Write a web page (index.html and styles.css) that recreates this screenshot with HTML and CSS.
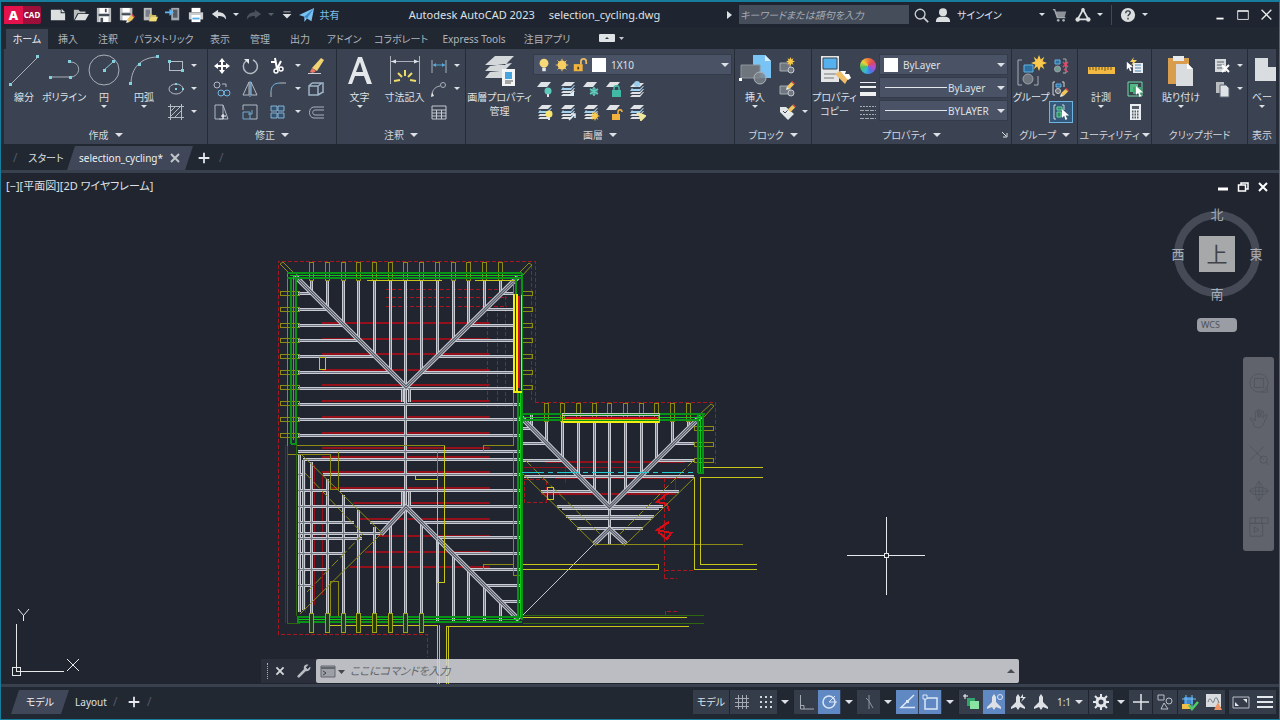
FILE: index.html
```html
<!DOCTYPE html>
<html lang="ja">
<head>
    <meta charset="UTF-8">
    <meta name="viewport" content="width=device-width, initial-scale=1.0">
    <title>Autodesk AutoCAD 2023 - selection_cycling.dwg</title>
    <link rel="stylesheet" href="styles.css">
</head>
<body>
<!-- shared icons -->
<svg class="defs" aria-hidden="true">
    <symbol id="sheets" viewBox="0 0 18 18">
        <path d="M6 2h10l-4 4H2z" fill="#dfe3e6"/><path d="M4 7h1l-1 1h8l3-3h1l-4 5H2z" fill="#9fd0ee"/><path d="M4 11h8l3-3h1l-4 5H2zM4 14h8l3-3h1l-4 5H2z" fill="#dfe3e6"/>
    </symbol>
    <symbol id="sheet" viewBox="0 0 18 18"><path d="M5 2h10l-4 5H1z" fill="#dfe3e6"/></symbol>
    <symbol id="star" viewBox="0 0 18 18"><path d="M9 0l2 5 4-3-2 5 5 2-5 2 2 5-4-3-2 5-2-5-4 3 2-5-5-2 5-2-2-5 4 3z" fill="#fbc94b"/></symbol>
    <symbol id="pencil" viewBox="0 0 10 10"><path d="M0 10l1-4 3 3z" fill="#f3efe2"/><path d="M1 6l5-5 3 3-5 5z" fill="#efc75e"/><path d="M6 1l1-1 3 3-1 1z" fill="#e2493f"/></symbol>
    <symbol id="cursor" viewBox="0 0 10 12"><path d="M1 0v10l2.500-2.500L5 12l2-1-2-4h4z" fill="#fff"/></symbol>
    <symbol id="annot" viewBox="0 0 18 18"><path d="M9 1l2 3v5l5 5v2l-5-2-2 3-2-3-5 2v-2l5-5V4z" fill="#dde1e6"/></symbol>
</svg>

<div class="app">
    <header class="titlebar">
        <button class="logo" aria-label="AutoCAD"><b>A</b><span>CAD</span></button>
        <nav class="qat">
            <button aria-label="新規"><svg viewBox="0 0 18 18"><path d="M1 3h11v4h5v8H1z" fill="#dcdfe0"/><path d="M13 2l4 4h-4z" fill="#dcdfe0"/></svg></button>
            <button aria-label="開く"><svg viewBox="0 0 18 18"><path d="M1 15V3h5l2 2h6v2H5z" fill="#b9bcbd"/><path d="M6 8h12l-4 7H2z" fill="#dcdfe0"/></svg></button>
            <button aria-label="上書き保存"><svg viewBox="0 0 18 18"><path d="M1 1h16v16H1z" fill="#b9bdc0"/><path d="M4 1h10v6H4zM4 11h10v6H4z" fill="#fff"/><path d="M10 2h2v4h-2zM5 12h3v5H5zM3 8h12v2H3z" fill="#444b57"/></svg></button>
            <button aria-label="名前を付けて保存"><svg viewBox="0 0 18 18"><path d="M1 1h14v14H1z" fill="#b9bdc0"/><path d="M4 1h8v5H4zM4 10h8v5H4z" fill="#fff"/><path d="M3 7h10v2H3z" fill="#444b57"/><use href="#pencil" x="8" y="8" width="10" height="10"/></svg></button>
            <button aria-label="Web から開く"><svg viewBox="0 0 18 18"><path d="M2 1h9v14H2z" fill="#b9bdc0"/><path d="M4 3h5v8H4z" fill="#777d86"/><path d="M8 8h3l1 1h4v7H8z" fill="#c8b964"/><path d="M10 11h8l-2 5H8z" fill="#f1dc7a"/></svg></button>
            <button aria-label="Web に保存"><svg viewBox="0 0 18 18"><path d="M7 1h9v14H7z" fill="#a3a8ae"/><path d="M9 3h5v9H9z" fill="#555c68"/><path d="M0 5h5V2l5 4-5 4V7H0z" fill="#5eb5f0"/></svg></button>
            <button aria-label="印刷"><svg viewBox="0 0 18 18"><path d="M4 1h10v5H4z" fill="#fff"/><path d="M1 6h16v8H1z" fill="#c9cdd0"/><path d="M4 9h10v8H4z" fill="#fff"/><path d="M5 12h8v2H5z" fill="#52b1f0"/></svg></button>
            <button aria-label="元に戻す"><svg viewBox="0 0 18 18"><path d="M1 8l7-5v3c6 0 9 3 9 8-2-3-4-4-9-4v3z" fill="#dcdfe0"/></svg></button>
            <i class="arr s"></i>
            <button aria-label="やり直し"><svg viewBox="0 0 18 18"><path d="M17 8l-7-5v3c-6 0-9 3-9 8 2-3 4-4 9-4v3z" fill="#4c525d"/></svg></button>
            <i class="arr s dim"></i>
            <button class="narrow" aria-label="カスタマイズ"><svg viewBox="0 0 18 18"><path d="M5 5h8v1H5zM4 8h10l-5 5z" fill="#dcdfe0"/></svg></button>
            <button class="share"><svg viewBox="0 0 18 18"><path d="M0 9L17 1l-3 15-5-3-3 4V11z" fill="#79c2f2"/><path d="M6 11L17 1 9 13z" fill="#3a8dc9"/></svg>共有</button>
        </nav>
        <h1 class="doc-title"><span>Autodesk AutoCAD 2023</span><span>selection_cycling.dwg</span></h1>
        <div class="title-right">
            <i class="tri-right"></i>
            <input class="search" type="text" placeholder="キーワードまたは語句を入力" aria-label="検索">
            <button aria-label="検索実行"><svg viewBox="0 0 18 18"><circle cx="8" cy="8" r="5.500" fill="none" stroke="#c9ced3" stroke-width="1.500"/><path d="M12 12l5 5" stroke="#c9ced3" stroke-width="2"/></svg></button>
            <button class="signin"><svg viewBox="0 0 18 18"><circle cx="9" cy="6" r="4.500" fill="#dcdfe0"/><path d="M1 17c0-6 4-6 8-6s8 0 8 6z" fill="#dcdfe0"/></svg>サインイン</button>
            <i class="arr s"></i>
            <button aria-label="ストア"><svg viewBox="0 0 18 18"><path d="M3 5h13l-2 7H6z" fill="#8d9298"/><path d="M1 3h2l3 9h9" fill="none" stroke="#a5aab0" stroke-width="1.500"/><circle cx="7" cy="15" r="1.500" fill="#a5aab0"/><circle cx="13" cy="15" r="1.500" fill="#a5aab0"/></svg></button>
            <button aria-label="Autodesk App"><svg viewBox="0 0 18 18"><path d="M9 3L3 14h12z" fill="none" stroke="#dcdfe0" stroke-width="2"/><circle cx="9" cy="3" r="2" fill="#dcdfe0"/><circle cx="3" cy="14" r="2.500" fill="#dcdfe0"/><circle cx="15" cy="14" r="2.500" fill="#dcdfe0"/></svg></button>
            <i class="arr s"></i>
            <span class="vsep"></span>
            <button aria-label="ヘルプ"><svg viewBox="0 0 18 18"><circle cx="9" cy="9" r="8" fill="#dcdfe0"/><path d="M6.500 7c0-4 5-3 5-.5 0 2-2.500 2-2.500 4M9 12v2" fill="none" stroke="#303744" stroke-width="1.500"/></svg></button>
            <i class="arr s"></i>
            <div class="win">
                <button aria-label="最小化"><svg viewBox="0 0 18 18"><path d="M5 13h8" stroke="#fff" stroke-width="2"/></svg></button>
                <button aria-label="最大化"><svg viewBox="0 0 18 18"><path d="M3 4h12v10H3zM3 5h12" fill="none" stroke="#e9ebed" stroke-width="1"/></svg></button>
                <button aria-label="閉じる"><svg viewBox="0 0 18 18"><path d="M4 3l11 11M15 3L4 14" stroke="#e9ebed" stroke-width="1.500"/></svg></button>
            </div>
        </div>
    </header>

    <nav class="tabs">
        <button class="tab active">ホーム</button>
        <button class="tab">挿入</button>
        <button class="tab">注釈</button>
        <button class="tab wide">パラメトリック</button>
        <button class="tab">表示</button>
        <button class="tab">管理</button>
        <button class="tab">出力</button>
        <button class="tab mid">アドイン</button>
        <button class="tab long">コラボレート</button>
        <button class="tab wide">Express Tools</button>
        <button class="tab long">注目アプリ</button>
        <button class="tab" aria-label="リボン表示"><svg class="ribbon-toggle" viewBox="0 0 28 10"><rect width="16" height="8" rx="1" fill="#dfe3e6"/><path d="M6 5l2-2 2 2z" fill="#333b48"/><path d="M20 3h5l-2.500 3z" fill="#c4c8ce"/></svg></button>
    </nav>

    <div class="ribbon">
        <section class="panel create">
            <div class="body">
                <button class="big"><svg viewBox="0 0 34 34"><path d="M4 30L31 3" stroke="#a9b0b9"/><path d="M2 29h3v3H2zM29 1h3v3h-3z" fill="#84d0dd"/></svg>線分</button>
                <button class="big"><svg viewBox="0 0 34 34"><path d="M4 23h19c11 0 12-15 0-15" fill="none" stroke="#a9b0b9" stroke-width="1"/><path d="M2 22h3v3H2zM22 22h3v3h-3zM21 6h3v3h-3z" fill="#84d0dd"/></svg>ポリライン</button>
                <button class="big"><svg viewBox="0 0 34 34"><circle cx="17" cy="16" r="15" fill="none" stroke="#a9b0b9"/><path d="M17 16l9-8" stroke="#84d0dd"/><path d="M16 15h3v3h-3zM25 6h3v3h-3z" fill="#84d0dd"/></svg>円<i class="arr s"></i></button>
                <button class="big"><svg viewBox="0 0 34 34"><path d="M4 30C4 14 14 3 31 3" fill="none" stroke="#a9b0b9"/><path d="M2 28h3v3H2zM11 9h3v3h-3zM29 1h3v3h-3z" fill="#84d0dd"/></svg>円弧<i class="arr s"></i></button>
                <div class="smalls g2">
                    <button aria-label="長方形"><svg viewBox="0 0 18 18"><rect x="2.500" y="4.500" width="13" height="9" fill="none" stroke="#b5bbc3"/><path d="M1 3h3v3H1zM14 12h3v3h-3z" fill="#84d0dd"/></svg></button><i class="arr s"></i>
                    <button aria-label="楕円"><svg viewBox="0 0 18 18"><ellipse cx="9" cy="9" rx="7" ry="5" fill="none" stroke="#b5bbc3"/><path d="M8 8h2v2H8zM8 3h2v2H8zM15 8h2v2h-2z" fill="#84d0dd"/></svg></button><i class="arr s"></i>
                    <button aria-label="ハッチング"><svg viewBox="0 0 18 18"><path d="M3.500 1v16M14.500 1v16M1 3.500h16M1 14.500h16M4 8l4-4M4 13l9-9M8 14l6-6" fill="none" stroke="#b5bbc3"/></svg></button><i class="arr s"></i>
                </div>
            </div>
            <button class="foot">作成<i class="arr"></i></button>
        </section>

        <section class="panel modify">
            <div class="body">
                <div class="smalls g5">
                    <button aria-label="移動"><svg viewBox="0 0 18 18"><path d="M9 1l3 4h-2v3h3V6l4 3-4 3v-2h-3v3h2l-3 4-3-4h2v-3H5v2L1 9l4-3v2h3V5H6z" fill="#fff"/></svg></button>
                    <button aria-label="回転"><svg viewBox="0 0 18 18"><path d="M12 3a7 7 0 1 1-7 1" fill="none" stroke="#b5bbc3" stroke-width="1.500"/><path d="M3 2h5v5z" fill="#e7eaed"/></svg></button>
                    <button aria-label="トリム"><svg viewBox="0 0 18 18"><path d="M6 1l2 11M12 4L8 12M2 5h5" stroke="#fff" stroke-width="2"/><circle cx="7" cy="14" r="2" fill="none" stroke="#fff" stroke-width="1.500"/><circle cx="12" cy="12" r="2" fill="none" stroke="#fff" stroke-width="1.500"/></svg></button><i class="arr s"></i>
                    <button aria-label="削除"><svg viewBox="0 0 18 18"><path d="M14 1l3 2-7 11-5-3z" fill="#f2d371"/><path d="M5 11l4 3-3 2-3-1z" fill="#f07764"/><path d="M1 16.500h13" stroke="#cdd2d6"/></svg></button>
                    <button aria-label="複写"><svg viewBox="0 0 18 18"><g fill="none" stroke="#b5bbc3"><circle cx="4" cy="5" r="3"/><path d="M9 4h4v3"/></g><g fill="none" stroke="#73b9e5"><circle cx="8" cy="13" r="3"/><circle cx="14" cy="13" r="3"/></g></svg></button>
                    <button aria-label="鏡像"><svg viewBox="0 0 18 18"><path d="M8 2L2 15h6zM10 2l6 13h-6z" fill="none" stroke="#b5bbc3"/><path d="M9 1v16" stroke="#73b9e5"/></svg></button>
                    <button aria-label="フィレット"><svg viewBox="0 0 18 18"><path d="M2 17v-5" stroke="#b5bbc3"/><path d="M2 12c0-6 3-9 9-9" fill="none" stroke="#73b9e5"/><path d="M11 3h6" stroke="#b5bbc3"/></svg></button><i class="arr s"></i>
                    <button aria-label="分解"><svg viewBox="0 0 18 18"><path d="M2 6h9v9H2zM5 3h11v10M2 6l3-3M11 6l4-3M11 15l5-3" fill="none" stroke="#9eb3c6" stroke-width="1.500"/></svg></button>
                    <button aria-label="ストレッチ"><svg viewBox="0 0 18 18"><path d="M2 2v14h8V2zM10 2l5 14H6" fill="none" stroke="#aeb8c3"/><path d="M10 11v5M8 13h5" stroke="#fff"/></svg></button>
                    <button aria-label="尺度変更"><svg viewBox="0 0 18 18"><path d="M2 7V2h14v14h-7" fill="none" stroke="#aeb8c3"/><path d="M2 9h7v7H2zM7 11h4V7" fill="none" stroke="#73a9cb"/></svg></button>
                    <button aria-label="配列複写"><svg viewBox="0 0 18 18"><g fill="#31526f" stroke="#8ab2d1"><path d="M2 3h6v5H2zM9 3h6v5H9zM2 10h6v5H2zM9 10h6v5H9z"/></g></svg></button><i class="arr s"></i>
                    <button aria-label="オフセット"><svg viewBox="0 0 18 18"><path d="M17 4H7c-6 0-6 11 0 11h10M17 7H8c-3 0-3 5 0 5h9" fill="none" stroke="#a8b1bb"/></svg></button>
                </div>
            </div>
            <button class="foot">修正<i class="arr"></i></button>
        </section>

        <section class="panel annotate">
            <div class="body">
                <button class="big"><svg viewBox="0 0 34 34"><path d="M5 30L15 3h4l10 27h-5l-3-8h-9l-3 8zM13 18h7L17 8z" fill="#e3e7ea" fill-rule="evenodd"/></svg>文字<i class="arr s"></i></button>
                <button class="big"><svg viewBox="0 0 34 34"><path d="M2.500 2v28M31.500 2v28M3 7.500h28" stroke="#a9b0b9"/><path d="M3 7.500l5-2v4zM31 7.500l-5-2v4z" fill="#dfe3e6"/><path d="M17 16v6M10 19l4 4M24 19l-4 4M6 27l6-1M28 27l-6-1" stroke="#eddc68" stroke-width="2"/></svg>寸法記入</button>
                <div class="smalls g2">
                    <button aria-label="長さ寸法"><svg viewBox="0 0 18 18"><path d="M2 3v13M16 3v13" stroke="#a9b0b9"/><path d="M3 8h12" stroke="#55a9d6"/><path d="M3 8l3-2v4zM15 8l-3-2v4z" fill="#55a9d6"/></svg></button><i class="arr s"></i>
                    <button aria-label="引出線"><svg viewBox="0 0 18 18"><path d="M2 16c0-5 2-9 8-10" fill="none" stroke="#a9b0b9"/><circle cx="13" cy="5" r="2.500" fill="none" stroke="#a9b0b9"/><path d="M1 17l1-5 2 4z" fill="#dfe3e6"/></svg></button><i class="arr s"></i>
                    <button aria-label="表"><svg viewBox="0 0 18 18"><path d="M2 3h14v13H2zM2 7h14M2 10h14M2 13h14M6.500 7v9M11.500 7v9" fill="none" stroke="#c5cad0"/></svg></button>
                </div>
            </div>
            <button class="foot">注釈<i class="arr"></i></button>
        </section>

        <section class="panel layers">
            <div class="body">
                <button class="big"><svg viewBox="0 0 34 34"><path d="M12 2h19l-9 9H2zM7 12l-5 5h19l8-8M7 18l-5 6h17l8-8" fill="#d4d8da"/><path d="M19 15h13v17H19z" fill="#f4f5f6"/><path d="M22 18h7v7h-7z" fill="#48a5dd"/><path d="M22 27h8M22 29h6" stroke="#555"/></svg><span>画層プロパティ<br>管理</span></button>
                <div class="layer-tools">
                    <div class="combo">
                        <svg viewBox="0 0 18 18"><circle cx="9" cy="7" r="5" fill="#f7d878"/><path d="M7 12h4v4H7z" fill="#e3e5e8"/></svg>
                        <svg viewBox="0 0 18 18"><circle cx="9" cy="9" r="5" fill="#f8cf62"/><path d="M9 2v14M2 9h14M4 4l10 10M14 4L4 14" stroke="#f8cf62" stroke-width="1"/></svg>
                        <svg viewBox="0 0 18 18"><path d="M2 8h10v8H2z" fill="#f3b43f"/><path d="M10 8V5c0-4 6-4 6 0v3" fill="none" stroke="#e8bb62" stroke-width="2"/><path d="M6 11h2v3H6z" fill="#5b431d"/></svg>
                        <i class="swatch"></i>
                        <select aria-label="画層"><option>1X10</option></select>
                    </div>
                    <div class="layer-grid">
                        <button aria-label="非表示"><svg viewBox="0 0 18 18"><use href="#sheet"/><circle cx="12" cy="11" r="3.500" fill="#5ecabb"/><path d="M11 14h2v3h-2z" fill="#dfe3e6"/></svg></button>
                        <button aria-label="選択表示"><svg viewBox="0 0 18 18"><use href="#sheets"/><path d="M9 16l6-6v6z" fill="#dceefa"/></svg></button>
                        <button aria-label="フリーズ"><svg viewBox="0 0 18 18"><use href="#sheet"/><path d="M12 7v9M8 9l8 5M16 9l-8 5" stroke="#5ecabb" stroke-width="1.500"/><circle cx="12" cy="11.500" r="3" fill="none" stroke="#5ecabb"/></svg></button>
                        <button aria-label="ロック"><svg viewBox="0 0 18 18"><use href="#sheet"/><path d="M7 10h9v7H7z" fill="#41b9a4"/><path d="M9 10V8c0-3 5-3 5 0v2" fill="none" stroke="#41b9a4" stroke-width="1.500"/></svg></button>
                        <button aria-label="現在層に設定"><svg viewBox="0 0 18 18"><use href="#sheets" y="1"/><circle cx="9" cy="4" r="3" fill="#9bcdea"/></svg></button>
                        <button aria-label="全表示"><svg viewBox="0 0 18 18"><use href="#sheets"/><circle cx="13" cy="11" r="3.500" fill="#f7e46e"/><path d="M12 14h2v3h-2z" fill="#dfe3e6"/></svg></button>
                        <button aria-label="選択表示解除"><svg viewBox="0 0 18 18"><use href="#sheets"/><path d="M10 17l6-6m-4 0h4v4" stroke="#dceefa" fill="none" stroke-width="1.500"/></svg></button>
                        <button aria-label="全フリーズ解除"><svg viewBox="0 0 18 18"><use href="#sheets"/><use href="#star" x="8" y="8" width="10" height="10"/></svg></button>
                        <button aria-label="ロック解除"><svg viewBox="0 0 18 18"><use href="#sheet"/><path d="M7 11h8v6H7z" fill="#f3b43f"/><path d="M13 11V9c0-3 4-3 4 0" fill="none" stroke="#f3b43f" stroke-width="1.500"/></svg></button>
                        <button aria-label="画層を一致"><svg viewBox="0 0 18 18"><use href="#sheets"/><path d="M9 10l5 5M13 17l4-4-5-2z" stroke="#f1e69d" stroke-width="2" fill="#f1e69d"/></svg></button>
                    </div>
                </div>
            </div>
            <button class="foot">画層<i class="arr"></i></button>
        </section>

        <section class="panel block">
            <div class="body">
                <button class="big"><svg viewBox="0 0 34 34"><path d="M15 1h12l6 6v17H15z" fill="#79c3f5"/><path d="M27 1v6h6z" fill="#d6ecfb"/><path d="M3 11h19v13H3z" fill="#6f757d" stroke="#8e949b"/><circle cx="22" cy="24" r="6" fill="#7c838b" fill-opacity=".8" stroke="#aeb4ba"/><path d="M1 24h3v3H1z" fill="#fff"/></svg>挿入<i class="arr s"></i></button>
                <div class="smalls g2">
                    <button aria-label="ブロック作成"><svg viewBox="0 0 18 18"><path d="M2 6h10v8H2z" fill="#717780" stroke="#a4abb2"/><circle cx="13" cy="13" r="3" fill="#717780" stroke="#c4cad0"/><use href="#star" x="8" width="9" height="9"/></svg></button><i></i>
                    <button aria-label="ブロック編集"><svg viewBox="0 0 18 18"><path d="M2 6h10v8H2z" fill="#717780" stroke="#a4abb2"/><circle cx="13" cy="13" r="3" fill="#717780" stroke="#c4cad0"/><use href="#pencil" x="8" y="1" width="9" height="9"/></svg></button><i></i>
                    <button aria-label="属性"><svg viewBox="0 0 18 18"><path d="M2 4h6l8 7-6 6-8-8z" fill="#e2e6e9"/><path d="M5 8l2 2 4-4" stroke="#414957" fill="none"/><use href="#pencil" x="9" y="1" width="9" height="9"/></svg></button><i class="arr s"></i>
                </div>
            </div>
            <button class="foot">ブロック<i class="arr"></i></button>
        </section>

        <section class="panel props">
            <div class="body">
                <button class="big"><svg viewBox="0 0 34 34"><path d="M3 2h18v26H3z" fill="#e3e5e7"/><path d="M5 4h14v11H5z" fill="#55b0ed" stroke="#3d454f"/><path d="M6 20h12M6 24h10" stroke="#777"/><path d="M17 20l5-3 8 8-3 5z" fill="#eebe6b"/><path d="M22 17l8 9 3-2-2-4-4 0 1-3z" fill="#fff"/></svg><span>プロパティ<br>コピー</span></button>
                <div class="smalls g1">
                    <button aria-label="色"><i class="wheel"></i></button>
                    <button aria-label="線の太さ"><svg viewBox="0 0 18 18"><path d="M1 2.500h16" stroke="#eef0f2"/><path d="M1 7h16" stroke="#eef0f2" stroke-width="2"/><path d="M1 14h16" stroke="#eef0f2" stroke-width="4"/></svg></button>
                    <button aria-label="線種"><svg viewBox="0 0 18 18"><path d="M1 3.500h16M1 11.500h16" stroke="#a6adb5" stroke-dasharray="2 1"/><path d="M1 7.500h16M1 15.500h16" stroke="#a6adb5" stroke-dasharray="4 1"/></svg></button>
                </div>
                <div class="prop-list">
                    <div class="combo"><i class="swatch"></i><select aria-label="オブジェクトの色"><option>ByLayer</option></select></div>
                    <div class="combo"><i class="line"></i><select aria-label="線の太さ"><option>ByLayer</option></select></div>
                    <div class="combo"><i class="line"></i><select aria-label="線種"><option>BYLAYER</option></select></div>
                </div>
            </div>
            <button class="foot">プロパティ<i class="arr"></i><svg class="launch" viewBox="0 0 8 8"><path d="M1 1l4 4M6 2v4H2" fill="none" stroke="#dfe3e6"/></svg></button>
        </section>

        <section class="panel group">
            <div class="body">
                <button class="big"><svg viewBox="0 0 34 34"><path d="M8 6H4v25h4M20 31h4V22" fill="none" stroke="#a7adb5"/><path d="M10 11h9v7h-9z" fill="#2d6f9e" stroke="#65b3e4"/><circle cx="14" cy="25" r="5" fill="#6f757d" stroke="#9ca3aa"/><use href="#star" x="17" y="1" width="16" height="16"/></svg>グループ</button>
                <div class="smalls g1">
                    <button aria-label="グループ解除"><svg viewBox="0 0 18 18"><path d="M3 3h5v4H3z" fill="#2d6f9e" stroke="#65b3e4"/><circle cx="5.500" cy="12" r="3" fill="#6f9a92" stroke="#9ca3aa"/><path d="M11 2h3v14h-3" fill="none" stroke="#aaa"/><path d="M11 5l5 5M16 5l-5 5M12 12l4 3" stroke="#e3496a" stroke-width="1.500"/></svg></button>
                    <button aria-label="グループ編集"><svg viewBox="0 0 18 18"><path d="M3 2H1v13h2M10 2h2v5" fill="none" stroke="#d1d6da"/><path d="M4 4h5v3H4z" fill="#2d6f9e" stroke="#65b3e4"/><circle cx="6" cy="11" r="2.500" fill="#6f757d" stroke="#ccc"/><use href="#pencil" x="8" y="8" width="9" height="9"/></svg></button>
                    <button class="on" aria-label="グループ選択"><svg viewBox="0 0 18 18"><path d="M4 2H2v14h2M10 2h2v5" fill="none" stroke="#d1d6da"/><path d="M5 4h5v3H5zM5 9h4v5H5z" fill="#2f8c68" stroke="#65d39b"/><use href="#cursor" x="9" y="6" width="9" height="11"/></svg></button>
                </div>
            </div>
            <button class="foot">グループ<i class="arr"></i></button>
        </section>

        <section class="panel util">
            <div class="body">
                <button class="big"><svg viewBox="0 0 34 34"><path d="M4 13h27v7H4z" fill="#f2ba43"/><path d="M6 13v3M9 13v3M12 13v4M15 13v3M18 13v3M21 13v4M24 13v3M27 13v3" stroke="#765719"/></svg>計測<i class="arr s"></i></button>
                <div class="smalls g1">
                    <button aria-label="クイック選択"><svg viewBox="0 0 18 18"><path d="M7 6h10v10H7z" fill="#e9edf0"/><path d="M9 8h6M9 11h6M9 14h6" stroke="#4f82a8"/><path d="M8 0L4 5h3L5 9l6-6H7z" fill="#f8d15d"/><use href="#cursor" x="0" y="4" width="8" height="11"/></svg></button>
                    <button aria-label="すべて選択"><svg viewBox="0 0 18 18"><path d="M2 2h14v14H2z" fill="none" stroke="#70dca1"/><path d="M4 4h8v8H4z" fill="#51ba83"/><path d="M7 7h8v7H7z" fill="#41a673"/><use href="#cursor" x="9" y="6" width="9" height="11"/></svg></button>
                    <button aria-label="計算機"><svg viewBox="0 0 18 18"><path d="M4 1h11v16H4z" fill="#e9edf0"/><path d="M6 3h7v3H6z" fill="#555d69"/><path d="M6 8.500h7M6 11.500h7M6 14.500h7" stroke="#555d69" stroke-width="2" stroke-dasharray="1.500 1"/></svg></button>
                </div>
            </div>
            <button class="foot">ユーティリティ<i class="arr"></i></button>
        </section>

        <section class="panel clip">
            <div class="body">
                <button class="big"><svg viewBox="0 0 34 34"><path d="M4 4h21v26H4z" fill="#d89d4d"/><path d="M9 2h11v5H9z" fill="#e8ebed"/><path d="M12 10h12l5 5v17H12z" fill="#dadddf"/><path d="M23 9v6h6z" fill="#fff"/></svg>貼り付け<i class="arr s"></i></button>
                <div class="smalls g2">
                    <button aria-label="切り取り"><svg viewBox="0 0 18 18"><path d="M2 2h11v13H2z" fill="#d5d9dc"/><path d="M4 5h7M4 8h7M4 11h5" stroke="#59616c"/><path d="M9 8l7 7M16 8l-7 7" stroke="#fff" stroke-width="2"/></svg></button><i class="arr s"></i>
                    <button aria-label="コピー"><svg viewBox="0 0 18 18"><path d="M3 2h8v11H3z" fill="#b9bdc0"/><path d="M7 5h6l3 3v9H7z" fill="#e0e3e5" stroke="#5b6470"/></svg></button><i class="arr s"></i>
                </div>
            </div>
            <div class="foot">クリップボード</div>
        </section>

        <section class="panel view">
            <div class="body">
                <button class="big"><svg viewBox="0 0 34 34"><path d="M10 4h13v9h9v14H10z" fill="#dadddf"/></svg>ベー<i class="arr s"></i></button>
            </div>
            <div class="foot">表示</div>
        </section>
    </div>

    <nav class="filetabs">
        <span class="slash">/</span>
        <button class="filetab">スタート</button>
        <div class="filetab current">selection_cycling*<button class="close" aria-label="閉じる"><svg viewBox="0 0 12 12"><path d="M2 2l8 8M10 2l-8 8" stroke="#c0c5cc" stroke-width="2"/></svg></button></div>
        <button class="add" aria-label="新しい図面"><svg viewBox="0 0 18 18"><path d="M9 3v12M3 9h12" stroke="#e6e9ed" stroke-width="2"/></svg></button>
        <span class="slash">/</span>
    </nav>

    <main class="canvas">
        <svg class="drawing" viewBox="1 173 1278 511" role="img" aria-label="小屋伏図">
            <g class="red-dash">
                <path d="M535 402H715V464M535 402V261H278V634H427.500V657M531 265V400"/>
                <path d="M386 289H507M386 297.500H507M386 306.500H507M487.500 307V407M497 307V407M505.500 290V407"/>
                <path d="M524 479H546V502H524zM664.500 478V580M664 578H677M665 570.500H694M677 611H665V617"/>
            </g>
            <!-- tie lines -->
            <path class="red" d="M322 323H490M322 339H490M322 354H490M322 370H490M322 385H490M322 401H490M322 417H490M322 433H490M322 448H490M322 457H490M322 472H490M330 488H490M353 503H490M358 519H490M378 536H490M365 552H490M350 567H490"/>
            <path class="red" d="M545 462H685M555 478H690M541 494H676"/>
            <path class="red thin" d="M523 467.500H640M285.500 445V623M305.500 460V612M314.500 465V605M322.500 475V595M565.500 462V483M675.500 478V490"/>
            <path class="red zig" d="M669 492l-12 10 10 2 2 7M669 522l-12 8 14 3-4 6-9-7"/>

            <!-- rafters: pale edges, then a dark core over them -->
            <g class="rafter">
                <g id="rafters">
                    <path d="M311.500 280V292M327.500 280V308M343.500 280V324M358.500 280V339M374.500 280V355M390.500 280V371M405.500 280V620M421.500 280V371M437.500 280V355M453.500 280V339M468.500 280V324M484.500 280V308M500.500 280V292"/>
                    <path d="M298 293.500H312M298 309.500H328M298 325.500H344M298 340.500H359M298 356.500H375M298 372.500H391M298 388.500H513M298 404.500H521M298 419.500H521M298 435.500H521M501 293.500H513M484 309.500H513M468 325.500H513M453 340.500H513M437 356.500H513M421 372.500H513"/>
                    <path d="M298 451.500H521M303 459.500H521M323 474.500H521M340 490.500H521M344 506.500H521M370 522.500H393M422 522.500H521M438 537.500H521M454 553.500H521M469 569.500H521M485 585.500H521M501 601.500H521"/>
                    <path d="M298 490.500H329M298 506.500H343M298 522.500H354M298 533.500H382M298 538.500H362M298 553.500H345M298 569.500H326M298 585.500H312M298 474.500H302"/>
                    <path d="M299.500 455V612M303.500 460V610M311.500 462V615M327.500 479V615M343.500 495V615M358.500 510V615M374.500 527V615M390.500 525V615M421.500 524V615M437.500 538V621M453.500 554V621M468.500 570V621M484.500 586V621M500.500 602V621M402.500 388V402M409.500 388V402M402.500 492V506M409.500 492V506"/>
                    <path d="M546.500 421V443M562.500 421V459M578.500 421V474M594.500 421V491M609.500 421V544M625.500 421V491M641.500 421V474M656.500 421V458M672.500 421V443M688.500 421V427M531.500 414V428"/>
                    <path d="M523 428.500H532M523 443.500H547M523 460.500H562M672 443.500H694M656 460.500H694M524 476.500H694M541 491.500H594M624 491.500H679M557 506.500H663M562 508.500H659M566 516.500H654M569 518.500H651M577 528.500H643"/>
                </g>
            </g>
            <use class="rafter-core" href="#rafters"/>
            <!-- hips and valleys -->
            <g class="hip">
                <path id="hips" d="M295 276L406 387L518 277M381 534L406 507L519 620M520 416L609.500 507L701 416M594 544L609.500 529L626 544"/>
            </g>
            <use class="hip-core" href="#hips"/>
            <use class="hip-mid" href="#hips"/>
            <path class="pale diag" d="M515 623L595 543"/>

            <g class="olive">
                <path class="diag" d="M302 455L382 533L300 614M523 474L595 544.500H743M694 478L626 544"/>
                <path class="diag dash" d="M305 473L363 534L307 592M525 460L601 535M694 460L617 537"/>
                <!-- rafter tails -->
                <path d="M309.500 262.500h4v18h-4zM325.500 262.500h4v18h-4zM341.500 262.500h4v18h-4zM356.500 262.500h4v18h-4zM372.500 262.500h4v18h-4zM388.500 262.500h4v18h-4zM403.500 262.500h4v18h-4zM419.500 262.500h4v18h-4zM435.500 262.500h4v18h-4zM451.500 262.500h4v18h-4zM466.500 262.500h4v18h-4zM482.500 262.500h4v18h-4zM498.500 262.500h4v18h-4z"/>
                <path d="M280 291.500h19v4h-19zM280 307.500h19v4h-19zM280 323.500h19v4h-19zM280 338.500h19v4h-19zM280 354.500h19v4h-19zM280 370.500h19v4h-19zM280 385.500h19v4h-19zM280 401.500h19v4h-19zM280 417.500h19v4h-19zM280 433.500h19v4h-19z"/>
                <path d="M522 291.500h10v4h-10zM522 307.500h10v4h-10zM522 323.500h10v4h-10zM522 338.500h10v4h-10zM522 354.500h10v4h-10zM522 370.500h10v4h-10zM522 385.500h10v4h-10z"/>
                <path d="M544.500 403.500h4v18h-4zM560.500 403.500h4v18h-4zM576.500 403.500h4v18h-4zM592.500 403.500h4v18h-4zM607.500 403.500h4v18h-4zM623.500 403.500h4v18h-4zM639.500 403.500h4v18h-4zM654.500 403.500h4v18h-4zM670.500 403.500h4v18h-4zM686.500 403.500h4v18h-4zM694 426.500h19v4h-19zM694 442.500h19v4h-19zM694 458.500h19v4h-19z"/>
                <path class="diag" d="M290 274L280 264l3-2 11 11M519 273l10-10 3 2-9 10M700 414l11-10 3 2-10 11"/>
                <path d="M296 445.500H444.500V582.500H437.500V452M330.500 454V489H338.500V452M287 454.500H330M330.500 616V581.500H338.500V616M483.500 452V445.500H514M483.500 569V564.500H513M513.500 452V575.500H522M513.500 280V445M287.500 273V446"/>
            </g>

            <!-- wall plates -->
            <path class="green" d="M287 273H522M287 278H522M291 277V444M296 277V444H291M516 277V295M518 393V620M522 273V620M297 617H522M297 622H522M298 616V622M522 414H705M522 420H698M698 414V473M703 414V473H698"/>
            <path class="lime" d="M290 275.500H522M293.500 275V440M520.500 393V618M299 619.500H520M524 417.500H700M700.500 416V472"/>
            <path class="dkgreen" d="M287.500 446V623.500H300M523 615.500H704M523 623.500H704M296.500 445V616"/>
            <path class="yellow" d="M367 280.500H442M475 280.500H515M415 476V479.500H437.500V582.500H444.500V446M330 625.500H437.500V684M439.500 625V684M446.500 684V626.500H688.500M448.500 684V627M523 617.500H687M523 564.500H658.500V569.500H523M703 467.500H763M700 477.500H763M700.500 477.500V564.500H757M694.500 477V569.500H757"/>
            <path class="yellow" d="M319.500 357.500h6v12h-6zM547.500 487.500h6v12h-6z"/>
            <!-- bottom tails sit over the plate -->
            <path class="tail" d="M309.500 613.500h4v19h-4zM325.500 613.500h4v19h-4zM341.500 613.500h4v19h-4zM356.500 613.500h4v19h-4zM372.500 613.500h4v19h-4zM388.500 613.500h4v19h-4zM403.500 613.500h4v19h-4zM419.500 613.500h4v19h-4z"/>
            <!-- openings -->
            <path class="yellow bold" d="M514 294V392H522M516.500 294V392M561 422H660"/>
            <path class="yellow" d="M562.500 413V423M659.500 413V423M562 419.500H659"/>
            <path class="pale" d="M562 413.500H659M562 415.500H659M521.500 295V390"/>
            <path class="red zig" d="M565 417.500H657M518.500 296V388"/>
            <path class="cyan" d="M522 472.500H697"/>

            <path class="white" d="M847 555.500H884M888 555.500H925M886.500 517V553M886.500 557V595M884.500 553.500h4v4h-4z"/>
            <path class="white" d="M16.500 624V667M20 671.500H64M12.500 667.500h8v8h-8zM16.500 671.500V667M16.500 671.500H21M23.500 615V621"/>
            <path class="white diag" d="M18 609L23.500 615.500L29 609M67 659L79 671M79 659L67 671"/>
        </svg>

        <div class="view-label"><button>[−]</button><button>[平面図]</button><button>[2D ワイヤフレーム]</button></div>

        <div class="docwin">
            <button aria-label="最小化"><svg viewBox="0 0 14 14"><path d="M2 9h10" stroke="#fff" stroke-width="3"/></svg></button>
            <button aria-label="元のサイズ"><svg viewBox="0 0 14 14"><path d="M2.500 5h7v6h-7zM5 5V3h7v6H9" fill="none" stroke="#fff" stroke-width="1.500"/></svg></button>
            <button aria-label="閉じる"><svg viewBox="0 0 14 14"><path d="M3 3l8 8M11 3l-8 8" stroke="#fff" stroke-width="2"/></svg></button>
        </div>

        <div class="viewcube">
            <span class="n">北</span><span class="w">西</span><button class="face">上</button><span class="e">東</span><span class="s">南</span>
        </div>
        <button class="wcs">WCS</button>

        <div class="navbar">
            <button aria-label="ホイール"><svg viewBox="0 0 24 24"><circle cx="12" cy="12" r="10"/><path d="M7 7h10v10H7zM21 16v6h-6"/></svg></button>
            <button aria-label="画面移動"><svg viewBox="0 0 24 24"><path d="M6 16L2 12l2-1 4 3V4l2-1 1 7V2h2v8l2-7 2 1-1 7 3-4 2 1-4 9c-1 5-8 6-11 2z"/></svg></button>
            <button aria-label="ズーム"><svg viewBox="0 0 24 24"><path d="M2 2l15 15M18 2L2 18"/><circle cx="17" cy="17" r="4"/><path d="M20 20l3 3"/></svg></button>
            <button aria-label="オービット"><svg viewBox="0 0 24 24"><ellipse cx="12" cy="12" rx="10" ry="4"/><ellipse cx="12" cy="12" rx="4" ry="10"/><path d="M12 1v22M2 12h20"/></svg></button>
            <button aria-label="ShowMotion"><svg viewBox="0 0 24 24"><path d="M2 2h20v6H2zM2 8h14v14H2zM8 2v6M15 2v6M7 12l5 3-5 3z"/></svg></button>
        </div>

        <form class="command">
            <span class="grip"></span>
            <button type="button" aria-label="閉じる"><svg viewBox="0 0 18 18"><path d="M5 5l8 8M13 5l-8 8" stroke="#d5d8dc" stroke-width="2"/></svg></button>
            <button type="button" aria-label="カスタマイズ"><svg viewBox="0 0 18 18"><path d="M3 15l8-8" stroke="#b9bdc3" stroke-width="3" stroke-linecap="round"/><path d="M16 4l-3 3-2-2 3-3c-4-1-6 2-5 5l2 2c3 1 6-2 5-5z" fill="#b9bdc3"/></svg></button>
            <label class="cmdbox">
                <svg viewBox="0 0 26 14"><path d="M1 2h14v11H1z" fill="#9da0a5" stroke="#63676e"/><path d="M1 4h14" stroke="#63676e" stroke-width="2"/><path d="M3 7l3 2-3 2" fill="none" stroke="#444"/><path d="M18 6h7l-3.500 4z" fill="#43474d"/></svg>
                <input type="text" placeholder="ここにコマンドを入力" aria-label="コマンド">
                <i class="arr up"></i>
            </label>
        </form>
    </main>

    <footer class="status">
        <nav class="layouts">
            <button class="filetab current">モデル</button>
            <button class="filetab">Layout</button>
            <span class="slash">/</span>
            <button class="add" aria-label="新しいレイアウト"><svg viewBox="0 0 18 18"><path d="M9 3v12M3 9h12" stroke="#e6e9ed" stroke-width="2"/></svg></button>
            <span class="slash">/</span>
        </nav>
        <div class="toggles">
            <button class="model">モデル</button>
            <button class="sep" aria-label="グリッド"><svg viewBox="0 0 18 18"><path d="M5.500 2v14M9.500 2v14M13.500 2v14M2 5.500h14M2 9.500h14M2 13.500h14" stroke="#a3aab3"/></svg></button>
            <button aria-label="スナップ"><svg viewBox="0 0 18 18"><path d="M3 4h12M3 9h12M3 14h12" stroke="#d0d5da" stroke-width="2" stroke-dasharray="2 3"/></svg></button>
            <i class="arr"></i>
            <button class="sep" aria-label="直交モード"><svg viewBox="0 0 18 18"><path d="M3.500 2v14H17M3 12.500h4V16" fill="none" stroke="#a3aab3"/></svg></button>
            <button class="on" aria-label="極トラッキング"><svg viewBox="0 0 18 18"><circle cx="9" cy="9" r="6" fill="none" stroke="#dbe7f6" stroke-width="1.500"/><path d="M9 9l6-6M9 9h8" stroke="#dbe7f6"/></svg></button>
            <i class="arr"></i>
            <button aria-label="アイソメ"><svg viewBox="0 0 18 18"><path d="M9 2v14M9 8l4 7M9 8l-3-3" fill="none" stroke="#8c949e"/></svg></button>
            <i class="arr"></i>
            <button class="on" aria-label="オブジェクトスナップトラッキング"><svg viewBox="0 0 18 18"><path d="M16 2L3 14.500h14" fill="none" stroke="#dbe7f6" stroke-width="1.500"/><path d="M8 7h3v3H8z" fill="#dbe7f6"/></svg></button>
            <button class="on" aria-label="オブジェクトスナップ"><svg viewBox="0 0 18 18"><path d="M4 5h12v11H4z" fill="none" stroke="#dbe7f6" stroke-width="1.500"/><path d="M2 2h4v4H2z" fill="#5a86c2" stroke="#dbe7f6"/></svg></button>
            <i class="arr"></i>
            <button class="sep" aria-label="選択の循環"><svg viewBox="0 0 18 18"><path d="M5 5h8v8H5z" fill="#36a26b"/><path d="M8 8h9v8H8z" fill="#8ae4a2"/><path d="M3 1v5M1 3h5" stroke="#fff"/></svg></button>
            <button class="on" aria-label="注釈の表示"><svg viewBox="0 0 18 18"><use href="#annot"/><circle cx="15" cy="4" r="2.500" fill="none" stroke="#dbe7f6"/></svg></button>
            <button aria-label="自動尺度"><svg viewBox="0 0 18 18"><use href="#annot"/><path d="M14 1l-3 4h3l-2 4 5-5h-3z" fill="#dfe3e6"/></svg></button>
            <button aria-label="注釈"><svg viewBox="0 0 18 18"><use href="#annot"/></svg></button>
            <button class="scale">1:1<i class="arr"></i></button>
            <button class="sep" aria-label="ワークスペース"><svg viewBox="0 0 18 18"><circle cx="9" cy="9" r="4" fill="none" stroke="#e3e6ea" stroke-width="3"/><path d="M9 1v4M9 13v4M1 9h4M13 9h4M3 3l3 3M12 12l3 3M15 3l-3 3M6 12l-3 3" stroke="#e3e6ea" stroke-width="2"/></svg></button>
            <i class="arr"></i>
            <button aria-label="注釈モニター"><svg viewBox="0 0 18 18"><path d="M9 1v16M1 9h16" stroke="#e3e6ea" stroke-width="1.500"/></svg></button>
            <button class="sep" aria-label="選択表示"><svg viewBox="0 0 18 18"><path d="M2 2h6v5H2zM5 16l3-6 4 6z" fill="none" stroke="#b9bfc7"/><circle cx="13" cy="8" r="3" fill="none" stroke="#b9bfc7"/></svg></button>
            <button class="sep" aria-label="CAD 標準"><svg viewBox="0 0 18 18"><path d="M3 4h9v7H3z" fill="#3f86c9"/><path d="M5 2v12M11 2v12M1 6h14" stroke="#75bdf0"/><path d="M1 11h8v5H1z" fill="#f0bf45"/><path d="M8 12l3 4 6-7" fill="none" stroke="#4fca66" stroke-width="2.500"/></svg></button>
            <button aria-label="グラフィックス"><svg viewBox="0 0 18 18"><path d="M1 1h15v13H1z" fill="#d8dcdf"/><path d="M3 9c3-9 4 5 6-1s3-3 5 2" fill="none" stroke="#6b727b"/><path d="M13 9l4 8H9z" fill="#ef9668"/></svg></button>
            <button class="sep last" aria-label="フルスクリーン"><svg viewBox="0 0 18 18"><path d="M1 4h16v11H1z" fill="none" stroke="#b9bfc7"/><path d="M3 13v-4l4 4zM15 6v4l-4-4z" fill="#e3e6ea"/></svg></button>
            <button aria-label="カスタマイズ"><svg viewBox="0 0 18 18"><path d="M1 4h16M1 9h16M1 14h16" stroke="#e3e6ea" stroke-width="2"/></svg></button>
        </div>
    </footer>
</div>
</body>
</html>
```
FILE: styles.css
```css
*,
*::before,
*::after {
    box-sizing: border-box;
}
body {
    margin: 0;
    background: #20252f;
    color: #dde0e5;
    font-family: "Noto Sans", "Noto Sans CJK JP", sans-serif;
    font-size: 10px;
    line-height: 14px;
    font-feature-settings: "palt";
}
button,
input,
select {
    font: inherit;
    font-feature-settings: inherit;
    color: inherit;
    background: none;
    border: 0;
    padding: 0;
    margin: 0;
}
button {
    display: flex;
    align-items: center;
    justify-content: center;
    white-space: nowrap;
}
svg {
    display: block;
    flex: none;
}
.defs {
    display: none;
}
.app {
    display: flex;
    flex-direction: column;
    height: 100vh;
    min-height: 480px;
    border: 1px solid #167d9d;
    border-top-width: 2px;
    overflow: hidden;
}
.arr {
    flex: none;
    width: 0;
    height: 0;
    border: 4px solid transparent;
    border-top-color: #dde0e5;
    border-bottom: 0;
}
.arr.s {
    border-width: 3px;
    border-bottom: 0;
}
.arr.dim {
    border-top-color: #5a606b;
}
.arr.up {
    border: 4px solid transparent;
    border-bottom-color: #4a4d52;
    border-top: 0;
}

/* title bar */
.titlebar {
    display: flex;
    align-items: center;
    flex: none;
    height: 25px;
    background: #1f2530;
}
.titlebar svg {
    width: 16px;
    height: 16px;
}
.logo {
    width: 37px;
    height: 18px;
    margin: 0 5px 0 3px;
    background: #9c0f3b;
    color: #fff;
    border-radius: 2px;
    font-size: 8px;
    font-weight: bold;
}
.logo b {
    width: 19px;
    background: #e4124b;
    font-size: 13px;
    line-height: 18px;
}
.logo span {
    flex: 1;
}
.qat {
    display: flex;
    align-items: center;
}
.qat button {
    width: 23px;
}
.qat .arr {
    margin: 0 3px;
}
.qat .narrow {
    width: 19px;
}
.qat .share {
    width: 46px;
    gap: 5px;
    color: #7cc0ee;
}
.doc-title {
    display: flex;
    justify-content: center;
    gap: 14px;
    flex: 1;
    margin: 0;
    font-size: 11px;
    font-weight: normal;
    white-space: nowrap;
}
.title-right {
    display: flex;
    align-items: center;
    width: 552px;
}
.tri-right {
    border: 4px solid transparent;
    border-left: 5px solid #dde0e5;
    border-right: 0;
    margin-right: 7px;
}
.search {
    width: 170px;
    height: 19px;
    padding: 0 1px;
    background: #454d5a;
    font-style: italic;
}
.search::placeholder {
    color: #a6acb5;
    opacity: 1;
}
.title-right button {
    width: 23px;
}
.title-right .signin {
    width: 66px;
    gap: 6px;
    justify-content: flex-start;
    margin: 0 35px 0 3px;
}
.title-right > .arr {
    margin: 0 3px;
}
.vsep {
    width: 1px;
    height: 20px;
    background: #424955;
    margin: 0 4px 0 5px;
}
.win {
    display: flex;
    margin: 0 2px 0 auto;
}

/* ribbon tabs */
.tabs {
    display: flex;
    flex: none;
    height: 22px;
    padding: 2px 0 0 5px;
    background: #222832;
    color: #aeb4bd;
}
.tab {
    width: 40px;
    height: 20px;
}
.tab.active {
    width: 42px;
    background: #3b4252;
    color: #eceef1;
}
.tab.wide {
    width: 72px;
}
.tab.mid {
    width: 48px;
}
.tab.long {
    width: 66px;
}
.tab.long + .tab.wide {
    width: 80px;
}
.ribbon-toggle {
    width: 28px;
    height: 10px;
    margin-left: 26px;
}

/* ribbon */
.ribbon {
    display: flex;
    flex: none;
    height: 95px;
    padding: 0 3px;
    gap: 1px;
    background: #252b37;
}
.panel {
    display: flex;
    flex-direction: column;
    flex: none;
    background: #3b4252;
    overflow: hidden;
}
.create { width: 203px; }
.modify { width: 128px; }
.annotate { width: 128px; }
.layers { width: 268px; }
.block { width: 76px; }
.props { width: 199px; }
.group { width: 65px; }
.util { width: 73px; }
.clip { width: 95px; }
.view { flex: 1; width: 0; }

.body {
    display: flex;
    flex: 1;
    padding-top: 5px;
}
.foot {
    position: relative;
    display: flex;
    align-items: center;
    justify-content: center;
    gap: 6px;
    height: 19px;
    color: #d3d7dd;
    white-space: nowrap;
}
.util .foot {
    gap: 2px;
}
.launch {
    position: absolute;
    right: 2px;
    bottom: 5px;
    width: 8px;
    height: 8px;
}
.big {
    flex-direction: column;
    justify-content: flex-start;
    flex: none;
    width: 42px;
}
.big svg {
    width: 34px;
    height: 34px;
    margin-bottom: 2px;
}
.big .arr {
    margin-top: 1px;
}
.create .big,
.block .big { width: 40px; }
.annotate .big,
.props .big { width: 45px; }
.layers .big { width: 67px; }
.group .big { width: 38px; }
.util .big { width: 46px; }
.clip .big { width: 58px; }
.view .big { width: 28px; }
.smalls {
    display: grid;
    grid-auto-rows: 23px;
    align-items: center;
    justify-items: center;
}
.smalls svg {
    width: 18px;
    height: 18px;
}
.g1 { grid-template-columns: 22px; }
.g2 { grid-template-columns: 24px 12px; }
.g5 { grid-template-columns: 28px 28px 28px 12px 24px; }
.group .smalls button {
    width: 22px;
    height: 20px;
}
.group .smalls .on {
    background: #34597a;
    outline: 1px solid #6db4e2;
}
.combo {
    display: flex;
    align-items: center;
    position: relative;
    height: 21px;
    background: #4a5366;
    border: 1px solid #343b49;
}
.combo::after {
    content: "";
    border: 4px solid transparent;
    border-top-color: #dde0e5;
    border-bottom: 0;
    margin: 0 2px;
}
.combo svg {
    width: 16px;
    height: 16px;
    margin-left: 2px;
}
.combo select {
    flex: 1;
    min-width: 0;
    appearance: none;
}
.swatch {
    width: 14px;
    height: 14px;
    margin: 0 5px 0 4px;
    background: #fff;
}
.line {
    width: 62px;
    height: 1px;
    margin: 0 1px 0 5px;
    background: #e5e8eb;
}
.wheel {
    width: 16px;
    height: 16px;
    border-radius: 50%;
    background: conic-gradient(#f5793b, #d84a5c, #b54bd1, #4976e8, #38b9d9, #4cc35f, #e9d43b, #f5793b);
}
.layer-tools {
    flex: 1;
    padding-right: 2px;
}
.layer-grid {
    display: grid;
    grid-template-columns: repeat(5, 23px);
    grid-auto-rows: 23px;
    padding-top: 2px;
}
.layer-grid svg {
    width: 18px;
    height: 18px;
}
.prop-list {
    display: flex;
    flex-direction: column;
    flex: 1;
    gap: 2px;
    padding-right: 3px;
}

/* file tabs */
.filetabs {
    display: flex;
    align-items: center;
    flex: none;
    height: 29px;
    padding: 2px 0 0 12px;
    border-bottom: 3px solid #3a414e;
    background: #222832;
}
.filetab {
    display: flex;
    align-items: center;
    justify-content: center;
    width: 50px;
    height: 24px;
}
.filetab.current {
    width: 126px;
    gap: 6px;
    background: #3f4758;
    clip-path: polygon(8px 0, 100% 0, calc(100% - 8px) 100%, 0 100%);
    color: #eef0f2;
}
.filetabs .filetab:first-of-type {
    margin-right: -4px;
}
.close svg {
    width: 12px;
    height: 12px;
}
.add {
    width: 30px;
}
.add svg {
    width: 16px;
    height: 16px;
}
.slash {
    color: #505866;
    width: 8px;
    font-size: 12px;
}

/* drawing area */
.canvas {
    position: relative;
    flex: 1;
    min-height: 0;
    background: #212530;
}
.drawing {
    width: 100%;
    height: 100%;
    fill: none;
    stroke-width: 1;
    shape-rendering: crispEdges;
}
.diag,
.hip,
.hip-core,
.hip-mid { shape-rendering: auto; }
.red { stroke: #94101b; stroke-width: 2; }
.red.thin { stroke-width: 1; }
.red.zig { stroke: #d20f19; }
.red-dash { stroke: #a81620; stroke-dasharray: 4 2; }
.rafter { stroke: #c9cbd3; stroke-width: 3; }
.rafter-core { stroke: #747884; stroke-width: 1; }
.hip { stroke: #c9cbd2; stroke-width: 5; }
.hip-core { stroke: #565b68; stroke-width: 3; }
.hip-mid { stroke: #aeb1ba; stroke-width: 1; }
.pale { stroke: #c4c8cc; }
.olive { stroke: #8c8c14; }
.olive .dash { stroke-dasharray: 9 3; }
.tail { stroke: #a0a315; fill: #213a1b; }
.green { stroke: #079316; stroke-width: 2; }
.lime { stroke: #10c81b; }
.dkgreen { stroke: #2f6611; }
.yellow { stroke: #c7c71b; }
.yellow.bold { stroke: #f0ef10; stroke-width: 2; }
.cyan { stroke: #22ccd0; stroke-dasharray: 22 4 5 4; }
.white { stroke: #e6e8ea; }

.view-label {
    position: absolute;
    top: 5px;
    left: 5px;
    display: flex;
    font-size: 11px;
    line-height: 16px;
}
.docwin {
    position: absolute;
    top: 7px;
    right: 9px;
    display: flex;
    gap: 6px;
}
.docwin svg {
    width: 14px;
    height: 14px;
}
.viewcube {
    position: absolute;
    top: 32px;
    right: 14px;
    display: grid;
    grid-template: 18px 1fr 18px / 18px 1fr 18px;
    place-items: center;
    width: 96px;
    height: 98px;
    font-size: 13px;
    color: #a9adb4;
}
.viewcube::before {
    content: "";
    position: absolute;
    top: 6px;
    left: 5px;
    width: 86px;
    height: 86px;
    border: 8px solid #454a56;
    border-radius: 50%;
}
.viewcube > * {
    position: relative;
}
.viewcube .n { grid-area: 1 / 2; }
.viewcube .w { grid-area: 2 / 1; }
.viewcube .e { grid-area: 2 / 3; }
.viewcube .s { grid-area: 3 / 2; }
.viewcube .face {
    grid-area: 2 / 2;
    width: 36px;
    height: 36px;
    background: #a6a8aa;
    color: #3f4247;
    font-size: 21px;
}
.wcs {
    position: absolute;
    top: 145px;
    right: 42px;
    width: 40px;
    height: 14px;
    padding-left: 4px;
    justify-content: flex-start;
    border-radius: 4px;
    background: #9a9da4;
    color: #4e525a;
    font-size: 9px;
}
.navbar {
    position: absolute;
    top: 184px;
    right: 5px;
    display: flex;
    flex-direction: column;
    align-items: center;
    gap: 12px;
    width: 31px;
    height: 194px;
    padding-top: 14px;
    border-radius: 3px;
    background: #60636b;
}
.navbar svg {
    width: 22px;
    height: 24px;
    fill: none;
    stroke: #50545c;
    stroke-width: 1;
}
.command {
    position: absolute;
    left: 260px;
    right: 260px;
    bottom: 1px;
    display: flex;
    align-items: center;
    height: 24px;
    background: linear-gradient(90deg, #2a2f3b 55px, transparent 55px);
}
.command button {
    width: 24px;
}
.command button svg {
    width: 16px;
    height: 16px;
}
.grip {
    height: 16px;
    border-left: 1px dotted #aeb2b8;
    margin: 0 0 0 6px;
}
.cmdbox {
    display: flex;
    align-items: center;
    flex: 1;
    height: 24px;
    padding: 0 4px;
    background: rgba(208, 211, 214, 0.88);
    border-radius: 2px;
}
.cmdbox svg {
    width: 26px;
    height: 14px;
}
.cmdbox input {
    flex: 1;
    min-width: 0;
    padding-left: 4px;
    font-size: 11px;
    font-style: italic;
    color: #44474c;
}
.cmdbox input::placeholder {
    color: #62666c;
    opacity: 1;
}

/* status bar */
.status {
    display: flex;
    justify-content: space-between;
    flex: none;
    height: 35px;
    padding: 3px 3px 0 10px;
    border-top: 3px solid #3a414e;
    background: #222832;
}
.layouts {
    display: flex;
    align-items: center;
    height: 24px;
}
.layouts .filetab.current {
    width: 58px;
}
.layouts .filetab {
    width: 44px;
}
.layouts .add {
    width: 26px;
}
.toggles {
    display: flex;
    align-items: center;
    height: 24px;
}
.toggles button {
    width: 23px;
    height: 24px;
    background: #363d4a;
}
.toggles svg {
    width: 18px;
    height: 18px;
}
.toggles .sep {
    width: 25px;
    border-left: 1px solid #1f242e;
}
.toggles .last {
    margin-left: 3px;
}
.toggles .on {
    background: #6089c4;
    border-right: 1px solid #31405a;
}
.toggles .model {
    width: 36px;
}
.toggles .scale {
    width: 36px;
    gap: 4px;
}
.toggles > .arr {
    margin: 0 4px;
}
```
